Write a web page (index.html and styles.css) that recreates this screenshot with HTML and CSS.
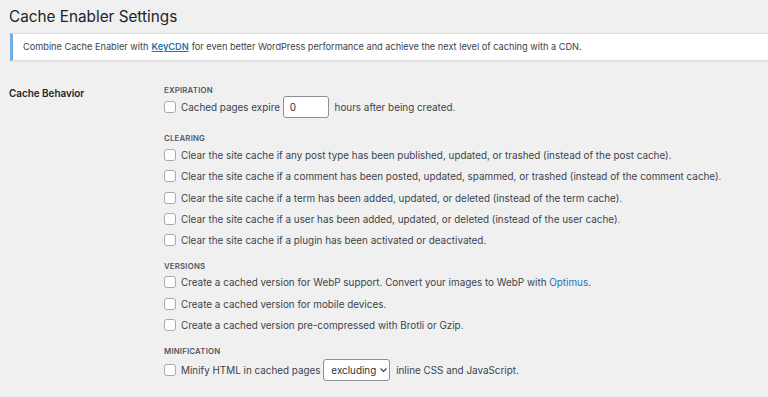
FILE: index.html
```html
<!DOCTYPE html>
<html>
<head>
<meta charset="utf-8">
<link rel="stylesheet" href="styles.css">
</head>
<body>
<div class="wrap">
  <h1 class="title">Cache Enabler Settings</h1>
  <div class="notice">Combine Cache Enabler with <a href="#">KeyCDN</a> for even better WordPress performance and achieve the next level of caching with a CDN.</div>
  <div class="form">
    <div class="th">Cache Behavior</div>
    <div class="td">
      <div class="group first">
        <div class="legend">Expiration</div>
        <div class="row"><span class="cb"></span>Cached pages expire <span class="num">0</span> hours after being created.</div>
      </div>
      <div class="group">
        <div class="legend">Clearing</div>
        <div class="row"><span class="cb"></span>Clear the site cache if any post type has been published, updated, or trashed (instead of the post cache).</div>
        <div class="row"><span class="cb"></span>Clear the site cache if a comment has been posted, updated, spammed, or trashed (instead of the comment cache).</div>
        <div class="row"><span class="cb"></span>Clear the site cache if a term has been added, updated, or deleted (instead of the term cache).</div>
        <div class="row"><span class="cb"></span>Clear the site cache if a user has been added, updated, or deleted (instead of the user cache).</div>
        <div class="row"><span class="cb"></span>Clear the site cache if a plugin has been activated or deactivated.</div>
      </div>
      <div class="group">
        <div class="legend">Versions</div>
        <div class="row"><span class="cb"></span>Create a cached version for WebP support. Convert your images to WebP with <a class="plain" href="#">Optimus</a>.</div>
        <div class="row"><span class="cb"></span>Create a cached version for mobile devices.</div>
        <div class="row"><span class="cb"></span>Create a cached version pre-compressed with Brotli or Gzip.</div>
      </div>
      <div class="group last">
        <div class="legend">Minification</div>
        <div class="row"><span class="cb"></span>Minify HTML in cached pages <span class="select">excluding<svg class="chev" width="9" height="6" viewBox="0 0 9 6"><path d="M1.5 1.5l3 3 3-3" fill="none" stroke="#3c434a" stroke-width="1.2"/></svg></span> inline CSS and JavaScript.</div>
      </div>
    </div>
  </div>
</div>
</body>
</html>
```
FILE: styles.css
```css
html, body {
  margin: 0;
  padding: 0;
  background: #f0f0f1;
}
body {
  font-family: Inter, "Liberation Sans", sans-serif;
  font-size: 9.9px;
  color: #3c434a;
  width: 768px;
  height: 397px;
  overflow: hidden;
}
.wrap {
  padding: 0 0 0 9px;
}
.title {
  margin: 0;
  padding: 6px 0 0 0;
  height: 27px;
  font-size: 15.3px;
  font-weight: 400;
  color: #1d2327;
  line-height: 22px;
  box-sizing: border-box;
}
.notice {
  background: #fff;
  border: 1px solid #dcdcde;
  border-left: 3px solid #72aee6;
  border-right: none;
  box-shadow: 0 1px 1px rgba(0,0,0,.04);
  height: 28px;
  box-sizing: border-box;
  padding: 0 0 1px 10px;
  display: flex;
  align-items: center;
  margin-top: 6px;
  margin-left: 1px;
  font-size: 9.2px;
}
.notice a {
  color: #2271b1;
  font-weight: 600;
  margin: 0 3px;
}
.form {
  display: flex;
  margin-top: 24px;
}
.th {
  width: 155px;
  font-weight: 600;
  color: #1d2327;
  padding-top: 2px;
}
.td {
  display: flex;
  flex-direction: column;
  gap: 10px;
}
.group.first {
  margin-bottom: 6px;
}
.legend {
  text-transform: uppercase;
  font-size: 7.8px;
  font-weight: 600;
  color: #50575e;
  letter-spacing: 0.2px;
  height: 11px;
  line-height: 11px;
}
.group.last .legend {
  margin-bottom: 3px;
}
.row {
  display: flex;
  align-items: center;
  height: 21.3px;
  white-space: pre;
}
.cb {
  width: 10px;
  height: 10px;
  border: 1px solid #a7aaad;
  border-radius: 3px;
  background: #fff;
  margin-right: 5px;
  flex: none;
}
.num {
  display: inline-flex;
  align-items: center;
  width: 46px;
  height: 22px;
  box-sizing: border-box;
  border: 1px solid #8c8f94;
  border-radius: 3px;
  background: #fff;
  padding-left: 6px;
  margin: 0 3px 0 0;
  color: #2c3338;
}
.select {
  display: inline-flex;
  align-items: center;
  gap: 3px;
  width: 67px;
  height: 22px;
  box-sizing: border-box;
  border: 1px solid #8c8f94;
  border-radius: 3px;
  background: #fff;
  padding-left: 7px;
  margin: 0 3px 0 0;
  color: #2c3338;
}
.chev {
  flex: none;
}
a {
  color: #2271b1;
}
a.plain {
  text-decoration: none;
}
```
